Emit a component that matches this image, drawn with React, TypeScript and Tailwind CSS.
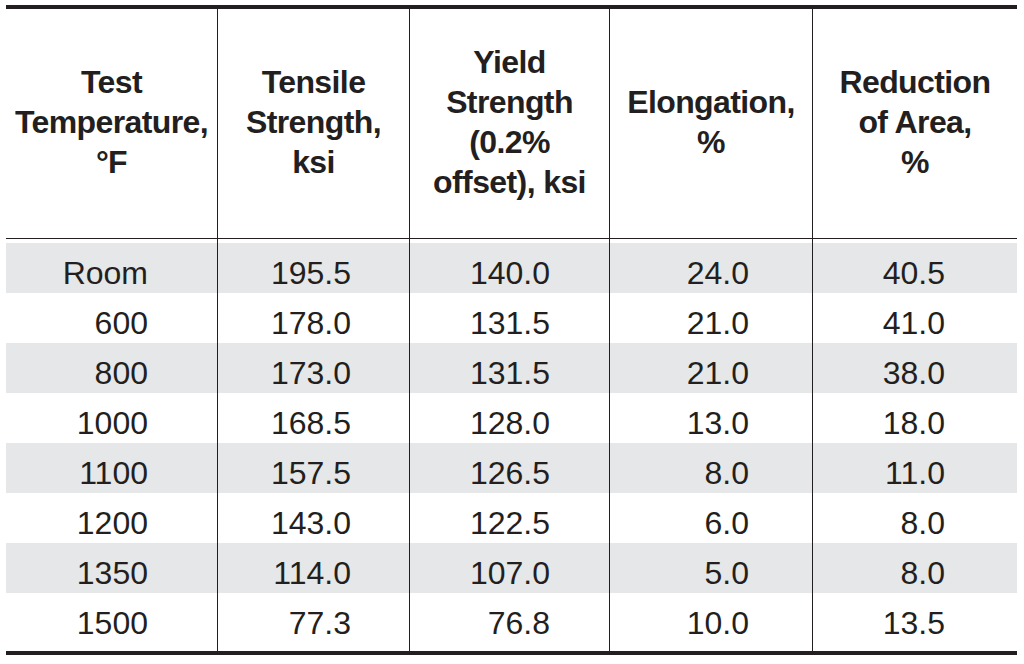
const cols = "grid grid-cols-[211px_192px_200px_203px_205px]";

const headers: string[][] = [
  ["Test", "Temperature,", "°F"],
  ["Tensile", "Strength,", "ksi"],
  ["Yield", "Strength", "(0.2%", "offset), ksi"],
  ["Elongation,", "%"],
  ["Reduction", "of Area,", "%"],
];

const rows: string[][] = [
  ["Room", "195.5", "140.0", "24.0", "40.5"],
  ["600", "178.0", "131.5", "21.0", "41.0"],
  ["800", "173.0", "131.5", "21.0", "38.0"],
  ["1000", "168.5", "128.0", "13.0", "18.0"],
  ["1100", "157.5", "126.5", "8.0", "11.0"],
  ["1200", "143.0", "122.5", "6.0", "8.0"],
  ["1350", "114.0", "107.0", "5.0", "8.0"],
  ["1500", "77.3", "76.8", "10.0", "13.5"],
];

// right padding per column so the numbers line up like the print
const pads = ["pr-[69px]", "pr-[58px]", "pr-[59px]", "pr-[63px]", "pr-[72px]"];

function divider(i: number) {
  return i === 0 ? "" : "border-l border-[#231f20]";
}

export default function App() {
  return (
    <div
      className="min-h-screen bg-white pt-[5px] pl-[6px] text-[#231f20]"
      style={{ fontFamily: '"Liberation Sans", Arial, sans-serif' }}
    >
      <div className="w-[1011px] border-t-4 border-[#231f20]">
        {/* header */}
        <div className={`${cols} h-[230px] border-b border-[#231f20]`}>
          {headers.map((lines, i) => (
            <div
              key={i}
              className={`flex flex-col items-center justify-center pb-[4px] text-center text-[32px] font-bold leading-[40px] tracking-[-0.6px] ${divider(i)}`}
            >
              {lines.map((l) => (
                <span key={l}>{l}</span>
              ))}
            </div>
          ))}
        </div>

        {/* small gap under the header rule */}
        <div className={`${cols} h-[4px]`}>
          {headers.map((_, i) => (
            <div key={i} className={divider(i)} />
          ))}
        </div>

        {rows.map((r, ri) => (
          <div
            key={ri}
            className={`${cols} h-[50px] ${ri % 2 === 0 ? "bg-[#e6e7e8]" : "bg-white"}`}
          >
            {r.map((v, i) => (
              <div
                key={i}
                className={`pt-[12px] text-right text-[32px] leading-[36px] ${pads[i]} ${divider(i)}`}
              >
                {v}
              </div>
            ))}
          </div>
        ))}

        <div className={`${cols} h-[12px] border-b-4 border-[#231f20]`}>
          {headers.map((_, i) => (
            <div key={i} className={divider(i)} />
          ))}
        </div>
      </div>
    </div>
  );
}
